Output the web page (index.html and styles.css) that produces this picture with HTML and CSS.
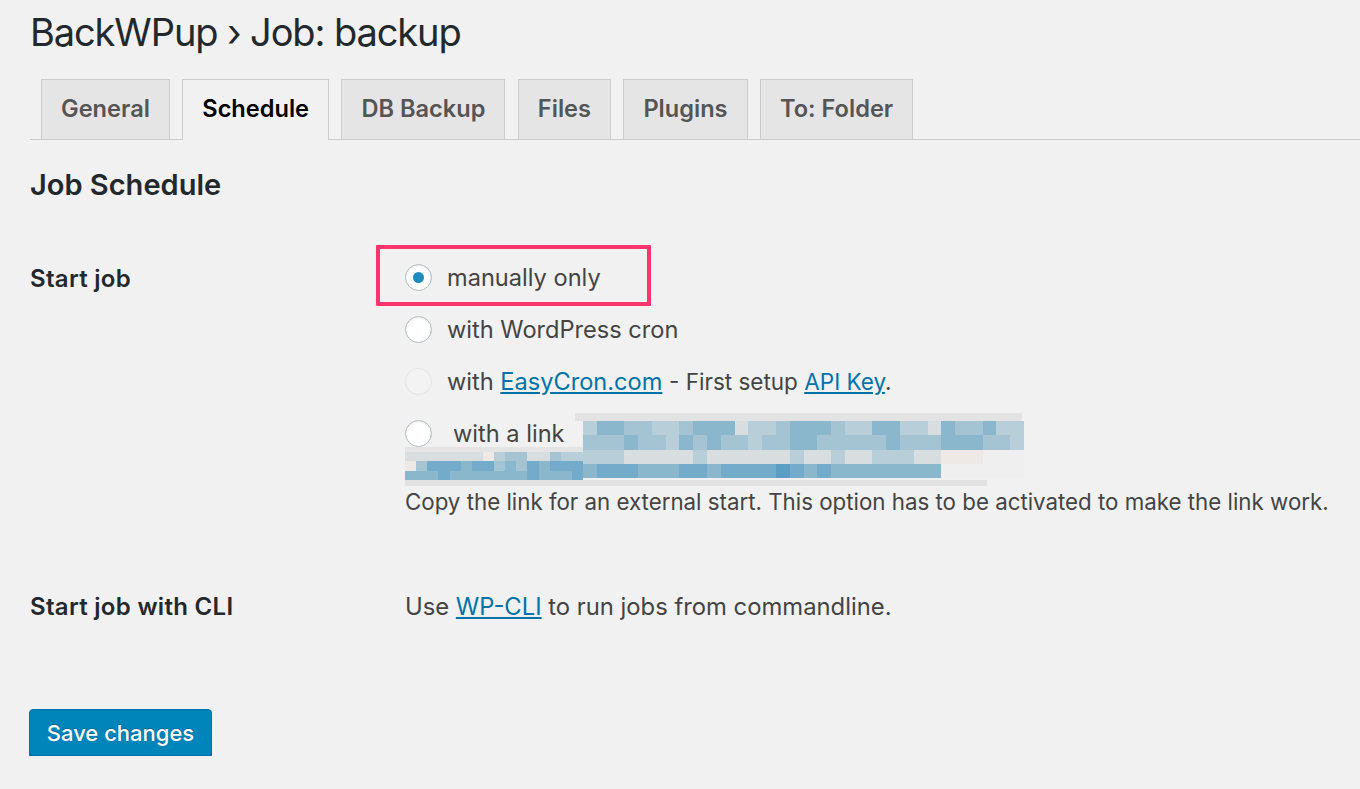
FILE: index.html
```html
<!DOCTYPE html>
<html lang="en">
<head>
<meta charset="utf-8">
<title>BackWPup › Job: backup</title>
<link rel="stylesheet" href="styles.css">
</head>
<body>
<div class="wrap">
  <h1 class="title">BackWPup › Job: backup</h1>
  <nav class="tabs">
    <a class="tab first" href="#">General</a>
    <a class="tab active" href="#">Schedule</a>
    <a class="tab" href="#">DB Backup</a>
    <a class="tab" href="#">Files</a>
    <a class="tab" href="#">Plugins</a>
    <a class="tab" href="#">To: Folder</a>
  </nav>
  <h2 class="section">Job Schedule</h2>
  <div class="form">
    <div class="label first-label">Start job</div>
    <div class="field">
      <div class="opt highlight"><span class="radio checked"></span><span>manually only</span></div>
      <div class="opt"><span class="radio"></span><span>with WordPress cron</span></div>
      <div class="opt"><span class="radio disabled"></span><span>with <a href="#">EasyCron.com</a> <span class="small">- First setup <a href="#">API Key</a>.</span></span></div>
      <div class="link-opt">
        <div class="opt"><span class="radio"></span><span class="lead">with a link</span></div>
        <div class="blur-top"></div>
        <div class="blur-grid right" id="blurRight"></div>
        <div class="blur-band left-band"></div>
        <div class="blur-grid left" id="blurLeft"></div>
        <div class="blur-bottom"></div>
      </div>
      <p class="desc">Copy the link for an external start. This option has to be activated to make the link work.</p>
    </div>
    <div class="label cli">Start job with CLI</div>
    <div class="field cli">Use <a href="#">WP-CLI</a> to run jobs from commandline.</div>
  </div>
  <button class="btn" type="button">Save changes</button>
</div>
<script src="script.js"></script>
</body>
</html>
```
FILE: styles.css
```css
*, *::before, *::after { box-sizing: border-box; }
body {
  margin: 0;
  background: #f1f1f1;
  font-family: Inter, "Noto Sans", "Liberation Sans", sans-serif;
  color: #444;
}
a { color: #0073aa; }
.wrap { padding: 8px 0 0 30px; }
.title {
  margin: 0;
  font-size: 38px;
  font-weight: 400;
  line-height: 48px;
  color: #23282d;
  letter-spacing: -1.1px;
}
.tabs {
  display: flex;
  align-items: flex-start;
  margin-top: 23px;
  height: 61px;
  border-bottom: 1px solid #ccc;
}
.tab {
  margin-left: 12.4px;
  height: 60px;
  padding: 0 19px 0 19px;
  border: 1px solid #ccc;
  border-bottom: 0;
  background: #e5e5e5;
  font-size: 23.6px;
  font-weight: 600;
  line-height: 58px;
  color: #555;
  text-decoration: none;
}
.tab.first { margin-left: 11px; }
.tab.active {
  height: 61px;
  background: #f1f1f1;
  color: #000;
}
.section {
  margin: 27px 0 0;
  font-size: 29px;
  font-weight: 600;
  line-height: 36px;
  color: #23282d;
}
.form {
  display: grid;
  grid-template-columns: 375px 1fr;
  margin-top: 48px;
}
.label {
  font-size: 24px;
  font-weight: 600;
  color: #23282d;
  line-height: 52px;
  padding-top: 2px;
  letter-spacing: 0.3px;
}
.opt {
  display: flex;
  align-items: center;
  height: 52px;
  font-size: 23.6px;
  position: relative;
}
.radio {
  flex: none;
  width: 27px;
  height: 27px;
  margin-right: 15px;
  border-radius: 50%;
  border: 1px solid #b4b9be;
  background: #fff;
  box-shadow: inset 0 1px 2px rgba(0, 0, 0, 0.1);
  display: flex;
  align-items: center;
  justify-content: center;
}
.radio.checked::after {
  content: "";
  width: 11px;
  height: 11px;
  border-radius: 50%;
  background: #1e8cbe;
}
.radio.disabled {
  background: #f3f3f3;
  border-color: #e4e4e4;
  box-shadow: none;
}
.highlight::before {
  content: "";
  position: absolute;
  left: -29px;
  top: -6px;
  width: 275px;
  height: 61px;
  border: 4px solid #fe3370;
  border-radius: 1px;
}
.small { font-size: 22.5px; }
.lead { padding-left: 6px; }
.link-opt {
  position: relative;
  height: 80px;
}
.blur-top {
  position: absolute;
  left: 170px;
  top: 6px;
  width: 447px;
  height: 8px;
  background: #e3e3e3;
}
.blur-grid {
  position: absolute;
  display: grid;
}
.blur-grid.right {
  left: 178px;
  top: 14px;
  width: 441px;
  height: 57px;
  grid-template-columns: repeat(32, 1fr);
  grid-template-rows: repeat(4, 1fr);
}
.blur-grid.left {
  left: 0;
  top: 45px;
  width: 178px;
  height: 28px;
  grid-template-columns: repeat(16, 1fr);
  grid-template-rows: repeat(3, 1fr);
}
.blur-band.left-band {
  position: absolute;
  left: 0;
  top: 40px;
  width: 178px;
  height: 5px;
  background: #e4e4e4;
}
.blur-bottom {
  position: absolute;
  left: 0;
  top: 73px;
  width: 582px;
  height: 6px;
  background: #e1e1e1;
}
.desc {
  margin: 0;
  font-size: 22.3px;
  line-height: 30px;
}
.cli {
  margin-top: 75px;
  line-height: 30px;
  padding-top: 0;
}
.field.cli { font-size: 23.8px; }
.btn {
  display: block;
  margin: 87px 0 0 -1px;
  width: 183px;
  height: 47px;
  padding: 0;
  background: #0085ba;
  border: 1px solid #0073aa;
  border-radius: 4px;
  box-shadow: 0 2px 0 #006799;
  color: #fff;
  font-family: Inter, "Noto Sans", sans-serif;
  font-size: 22px;
  font-weight: 500;
  text-shadow: 0 -1px 1px #006799;
}
```
FILE: script.js
```js
(function () {
  var palette = {
    "0": "#efefef", "1": "#d8dde0", "2": "#b8ced9", "3": "#a4c3d3",
    "4": "#8bb7cd", "5": "#74aaca", "6": "#5b9ec4", "7": "#efe9e6"
  };
  var right = [
    "24433223444122344432244221433422",
    "33343324343323344333334333444332",
    "22211111211111121121122211777000",
    "45554445545555654544444444000000"
  ];
  var left = [
    "1111111723311322",
    "7355545534354555",
    "4445444444454445"
  ];
  function fill(id, rows) {
    var el = document.getElementById(id);
    rows.forEach(function (row) {
      row.split("").forEach(function (d) {
        var c = document.createElement("span");
        c.style.background = palette[d];
        el.appendChild(c);
      });
    });
  }
  fill("blurRight", right);
  fill("blurLeft", left);
})();
```
